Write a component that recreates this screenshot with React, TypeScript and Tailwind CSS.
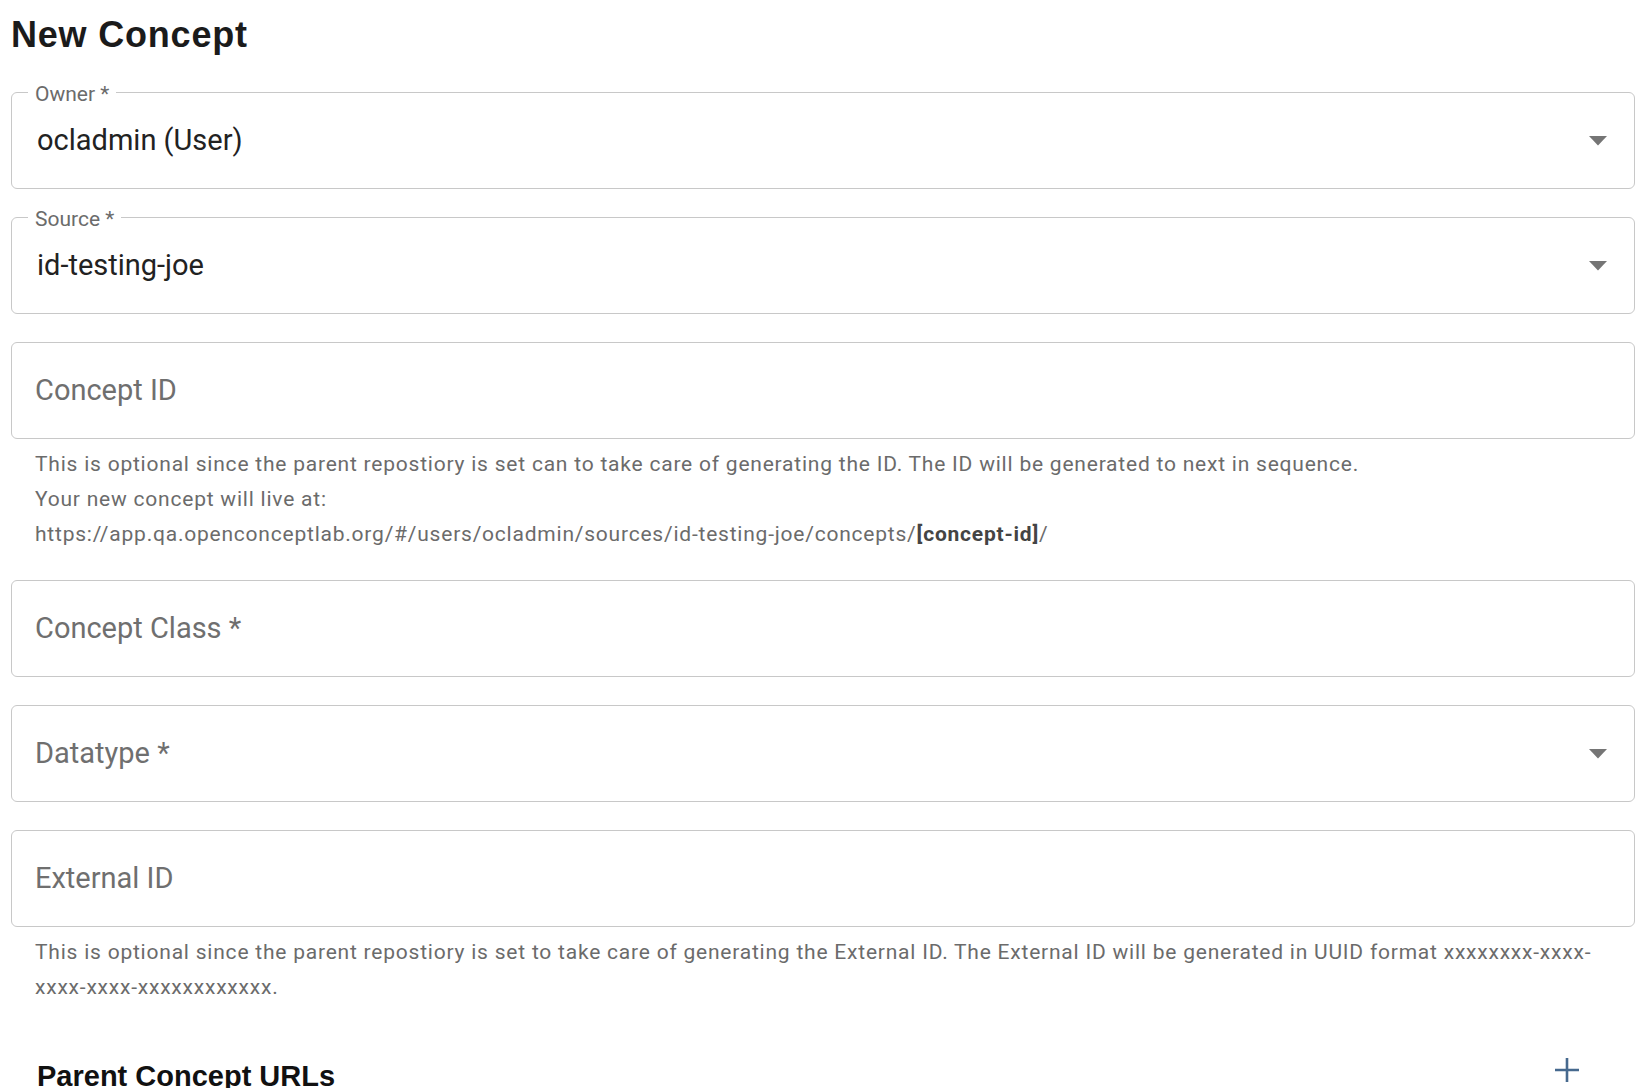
const roboto = { fontFamily: "Roboto, 'Liberation Sans', sans-serif" };

function Caret() {
  return (
    <svg width="18" height="10" viewBox="0 0 18 10" className="shrink-0">
      <path d="M0 0 L18 0 L9 9.5 Z" fill="#757575" />
    </svg>
  );
}

function SelectField({ label, value }: { label: string; value: string }) {
  return (
    <div className="relative flex h-[97px] items-center justify-between rounded-[6px] border border-[#c8c8c8] pl-[25px] pr-[27px]">
      <span className="absolute -top-[10px] left-[16px] bg-white px-[7px] text-[21px] leading-[22px] text-[#6b6b6b]">
        {label}
      </span>
      <span className="text-[29px] text-[#222]">{value}</span>
      <Caret />
    </div>
  );
}

function TextField({ placeholder, caret }: { placeholder: string; caret?: boolean }) {
  return (
    <div className="flex h-[97px] items-center justify-between rounded-[6px] border border-[#c8c8c8] pl-[23px] pr-[27px]">
      <span className="text-[29px] text-[#6f6f6f]">{placeholder}</span>
      {caret && <Caret />}
    </div>
  );
}

function Helper({ children }: { children: React.ReactNode }) {
  return (
    <div className="ml-[24px] mr-[18px] mt-[8px] text-[21px] leading-[35px] tracking-[0.78px] text-[#6b6b6b]">
      {children}
    </div>
  );
}

export default function App() {
  return (
    <div className="min-h-screen overflow-hidden bg-white pl-[11px] pr-[15px] pt-[15px]" style={roboto}>
      <h1
        className="h-[40px] text-[36px] font-bold leading-[40px] tracking-[0.8px] text-[#1b1b1b]"
        style={{ fontFamily: "'Liberation Sans', Arial, sans-serif" }}
      >
        New Concept
      </h1>

      <div className="mt-[37px] flex flex-col gap-[28px]">
        <SelectField label="Owner *" value="ocladmin (User)" />
        <SelectField label="Source *" value="id-testing-joe" />

        <div>
          <TextField placeholder="Concept ID" />
          <Helper>
            <div>
              This is optional since the parent repostiory is set can to take care of generating the ID. The ID
              will be generated to next in sequence.
            </div>
            <div>Your new concept will live at:</div>
            <div>
              https://app.qa.openconceptlab.org/#/users/ocladmin/sources/id-testing-joe/concepts/
              <span className="font-bold text-[#444]">[concept-id]</span>/
            </div>
          </Helper>
        </div>

        <TextField placeholder="Concept Class *" />
        <TextField placeholder="Datatype *" caret />

        <div>
          <TextField placeholder="External ID" />
          <Helper>
            This is optional since the parent repostiory is set to take care of generating the External ID. The
            External ID will be generated in UUID format xxxxxxxx-xxxx-
            <br />
            xxxx-xxxx-xxxxxxxxxxxx.
          </Helper>
        </div>
      </div>

      <div className="mt-[52px] flex h-[40px] items-center justify-between pl-[26px] pr-[55px]">
        <h2
          className="text-[29px] font-bold text-[#111]"
          style={{ fontFamily: "'Liberation Sans', Arial, sans-serif" }}
        >
          Parent Concept URLs
        </h2>
        <svg width="26" height="26" viewBox="0 0 26 26" className="-mt-[15px]">
          <path d="M13 1 V25 M1 13 H25" stroke="#46698e" strokeWidth="2.6" />
        </svg>
      </div>
    </div>
  );
}
